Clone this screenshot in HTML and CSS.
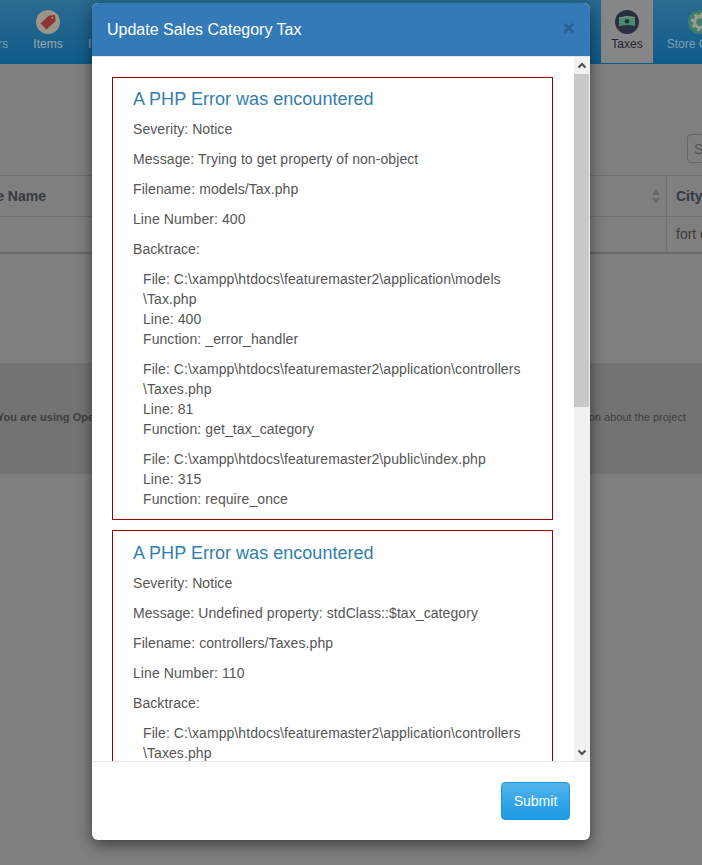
FILE: index.html
```html
<!DOCTYPE html>
<html lang="en">
<head>
<meta charset="utf-8">
<title>Update Sales Category Tax</title>
<link rel="stylesheet" href="styles.css">
</head>
<body>
<div class="page">
  <nav class="nav">
    <div class="nav-group nav-left">
      <a class="nav-item nav-first"><span class="nav-icon"></span><span>Suppliers</span></a>
      <a class="nav-item">
        <svg class="nav-icon" viewBox="0 0 24 24"><circle cx="12" cy="12" r="12" fill="#9a9587"/><path d="M4.5 13.5 13 5.5 19 5 19.5 11 10.5 19.5Z" fill="#8c3434"/><circle cx="16.4" cy="7.8" r=".8" fill="#cfc7b5"/></svg>
        <span>Items</span>
      </a>
      <a class="nav-item nav-third"><span class="nav-icon"></span><span>Item Kits</span></a>
    </div>
    <div class="nav-group nav-right">
      <a class="nav-item nav-active">
        <svg class="nav-icon" viewBox="0 0 24 24"><circle cx="12" cy="12" r="12" fill="#2a3040"/><path d="M4 8Q12 5.5 20 7.5V16Q12 14 4 16.5Z" fill="#4a8a70"/><path d="M4 8Q12 5.5 20 7.5" fill="none" stroke="#8b9a88" stroke-width="1"/><circle cx="12" cy="11.3" r="2.3" fill="#223436"/></svg>
        <span>Taxes</span>
      </a>
      <a class="nav-item nav-store">
        <svg class="nav-icon" viewBox="0 0 24 24"><circle cx="12" cy="12" r="12" fill="#3f7f6a"/><circle cx="12" cy="12" r="5.5" fill="none" stroke="#9a9a90" stroke-width="3.4"/><circle cx="12" cy="12" r="8" fill="none" stroke="#9a9a90" stroke-width="2.4" stroke-dasharray="3 3.3"/></svg>
        <span>Store Config</span>
      </a>
    </div>
  </nav>

  <div class="search-row"><span class="search-box">Search</span></div>

  <div class="table">
    <div class="table-row table-head">
      <div class="cell cell-name">Tax Code Name</div>
      <div class="cell cell-sort"><svg class="sort" viewBox="0 0 8 15"><path d="M4 0 8 6H0Z M4 15 0 9H8Z" fill="#666"/></svg></div>
      <div class="cell cell-city">City</div>
    </div>
    <div class="table-row table-body">
      <div class="cell cell-name"></div>
      <div class="cell cell-sort"></div>
      <div class="cell cell-city">fort collins</div>
    </div>
  </div>

  <footer class="band">
    <b class="band-left">You are using Open Source Point Of Sale</b>
    <span class="band-right">more information about the project</span>
  </footer>
</div>

<div class="modal">
  <header class="modal-head">
    <h4 class="modal-title">Update Sales Category Tax</h4>
    <span class="modal-close">×</span>
  </header>
  <div class="modal-main">
    <div class="modal-body">
      <div class="php-error">
        <h4>A PHP Error was encountered</h4>
        <p>Severity: Notice</p>
        <p>Message: Trying to get property of non-object</p>
        <p>Filename: models/Tax.php</p>
        <p>Line Number: 400</p>
        <p>Backtrace:</p>
        <p class="trace">File: C:\xampp\htdocs\featuremaster2\application\models<br>\Tax.php<br>Line: 400<br>Function: _error_handler</p>
        <p class="trace">File: C:\xampp\htdocs\featuremaster2\application\controllers<br>\Taxes.php<br>Line: 81<br>Function: get_tax_category</p>
        <p class="trace">File: C:\xampp\htdocs\featuremaster2\public\index.php<br>Line: 315<br>Function: require_once</p>
      </div>
      <div class="php-error">
        <h4>A PHP Error was encountered</h4>
        <p>Severity: Notice</p>
        <p>Message: Undefined property: stdClass::$tax_category</p>
        <p>Filename: controllers/Taxes.php</p>
        <p>Line Number: 110</p>
        <p>Backtrace:</p>
        <p class="trace">File: C:\xampp\htdocs\featuremaster2\application\controllers<br>\Taxes.php<br>Line: 110<br>Function: _error_handler</p>
      </div>
    </div>
    <div class="scrollbar">
      <svg class="scroll-arrow" viewBox="0 0 16 17"><path d="M4.5 10.5 8 7 11.5 10.5" fill="none" stroke="#505050" stroke-width="2"/></svg>
      <div class="scroll-track"><div class="scroll-thumb"></div></div>
      <svg class="scroll-arrow" viewBox="0 0 16 17"><path d="M4.5 6.5 8 10 11.5 6.5" fill="none" stroke="#505050" stroke-width="2"/></svg>
    </div>
  </div>
  <footer class="modal-foot"><button class="submit" type="button">Submit</button></footer>
</div>
</body>
</html>
```

FILE: styles.css
```css
* { box-sizing: border-box; }
html, body { margin: 0; height: 100%; }
body {
  background: #7f7f7f;
  font-family: "Liberation Sans", Arial, sans-serif;
  font-size: 14px;
  line-height: 20px;
  color: #555;
  overflow: hidden;
}
.page { width: 702px; height: 865px; overflow: hidden; }

.nav {
  height: 64px;
  display: flex;
  justify-content: space-between;
  overflow: hidden;
  background: linear-gradient(#2b6b91, #0e5b88);
  font-size: 12px;
  color: #9aa9b1;
}
.nav-group { display: flex; }
.nav-left { margin-left: -56px; }
.nav-right { margin-right: -37px; }
.nav-item {
  display: flex;
  flex-direction: column;
  align-items: center;
  padding-top: 10px;
  width: 52px;
  white-space: nowrap;
}
.nav-left .nav-item { width: 64px; margin-right: 8px; }
.nav-first { align-items: flex-end; color: #86a0ae; }
.nav-left .nav-third { align-items: flex-start; }
.nav-icon { width: 24px; height: 24px; display: block; flex: none; }
.nav-active { background: #878787; color: #23233a; height: 63px; }
.nav-store { width: 78px; margin-left: 8px; color: #7f9fb4; }

.search-row {
  height: 111px;
  padding: 70px 0 0 687px;
}
.search-box {
  display: block;
  width: 120px;
  height: 29px;
  border: 1px solid #666;
  border-radius: 4px;
  padding: 4px 6px;
  color: #555;
}

.table { border-bottom: 2px solid #696969; }
.table-row { display: flex; border-top: 1px solid #6f6f6f; }
.table-head { height: 41px; font-weight: 700; color: #333a44; }
.table-body { height: 36px; color: #3c3c3c; }
.cell { padding: 10px 9px; border-right: 1px solid #6f6f6f; white-space: nowrap; }
.table-body .cell { padding-top: 7px; }
.cell-name { width: 400px; margin-left: -58px; padding-left: 0; border-right: 0; }
.cell-sort { flex: 1; display: flex; justify-content: flex-end; align-items: center; padding-right: 6px; }
.cell-city { width: 35px; border-right: 0; overflow: hidden; flex: none; }
.sort { width: 8px; height: 15px; }

.band {
  margin-top: 109px;
  height: 111px;
  background: #737373;
  display: flex;
  justify-content: space-between;
  align-items: center;
  font-size: 11px;
  color: #3f3f3f;
  padding: 0 16px 3px 0;
  white-space: nowrap;
}
.band-left { margin-left: -3px; letter-spacing: .05px; }

.modal {
  position: absolute;
  left: 92px;
  top: 3px;
  width: 498px;
  height: 837px;
  display: flex;
  flex-direction: column;
  background: #fff;
  border-radius: 6px;
  box-shadow: 0 5px 15px rgba(0, 0, 0, .5);
  overflow: hidden;
}
.modal-head {
  flex: none;
  height: 54px;
  background: #337ab7;
  border-bottom: 1px solid #e5e5e5;
  display: flex;
  justify-content: space-between;
  align-items: center;
  padding: 0 15px;
  color: #fff;
}
.modal-title { margin: 0; font-size: 16px; font-weight: 400; }
.modal-close { font-size: 21px; font-weight: 700; color: #295f8f; line-height: 1; margin-top: -4px; }
.modal-main { flex: 1; min-height: 0; display: flex; }
.modal-body { flex: 1; min-width: 0; padding: 20px 21px 0 20px; overflow: hidden; }
.php-error { border: 1px solid #900; padding-left: 20px; margin-bottom: 10px; }
.php-error + .php-error { padding-top: 1px; }
.php-error h4 { margin: 11px 0 10px; font-size: 18px; font-weight: 400; line-height: 20px; color: #317eac; letter-spacing: .03px; }
.php-error p { margin: 0 0 10px; letter-spacing: .08px; }
.php-error .trace { margin-left: 10px; }

.scrollbar { flex: none; width: 16px; display: flex; flex-direction: column; background: #f1f1f1; }
.scroll-arrow { display: block; flex: none; width: 16px; height: 17px; }
.scroll-track { flex: 1; }
.scroll-thumb { width: 15px; height: 333px; background: #c8c8c8; }

.modal-foot {
  flex: none;
  height: 79px;
  border-top: 1px solid #e5e5e5;
  display: flex;
  justify-content: flex-end;
  padding: 20px 20px 0 0;
}
.submit {
  width: 69px;
  height: 38px;
  border: 1px solid #1f93d8;
  border-radius: 4px;
  background: linear-gradient(#54b4eb, #2fa4e7 60%, #1d9ce5);
  color: #fff;
  font: 14px "Liberation Sans", Arial, sans-serif;
  padding: 0;
}
```
